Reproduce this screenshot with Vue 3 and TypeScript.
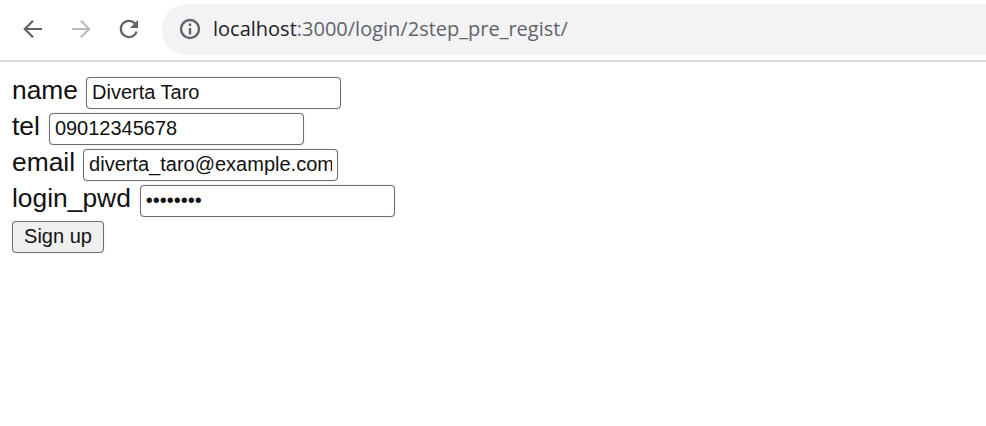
<script setup lang="ts">
import { ref } from 'vue'
const name = ref('Diverta Taro')
const tel = ref('09012345678')
const email = ref('diverta_taro@example.com')
const pwd = ref('password')
</script>

<template>
  <div class="page">
    <header class="toolbar">
      <svg class="nav back" viewBox="0 0 24 24" width="24" height="24"><path d="M21 12H4M12 3.8 3.8 12l8.2 8.2" fill="none" stroke="#5f6368" stroke-width="2.2"/></svg>
      <svg class="nav forward" viewBox="0 0 24 24" width="24" height="24"><path d="M3 12h17M12 3.8l8.2 8.2-8.2 8.2" fill="none" stroke="#b9bbbe" stroke-width="2.2"/></svg>
      <svg class="nav reload" viewBox="0 0 24 24" width="24" height="24"><path d="M19.6 14.5A8.1 8.1 0 1 1 18 6.6" fill="none" stroke="#5f6368" stroke-width="2.2"/><path d="M21 3v8h-8z" fill="#5f6368"/></svg>
      <div class="omnibox">
        <svg class="info" viewBox="0 0 24 24" width="24" height="24"><circle cx="12" cy="12" r="9" fill="none" stroke="#5f6368" stroke-width="2.4"/><path d="M12 11v6.4M12 6.6v2.4" fill="none" stroke="#5f6368" stroke-width="2.4"/></svg>
        <span class="url"><span class="host">localhost</span>:3000/login/2step_pre_regist/</span>
      </div>
    </header>
    <form class="form" @submit.prevent>
      <div class="row"><label for="f-name">name</label><input id="f-name" v-model="name" type="text" /></div>
      <div class="row wide"><label for="f-tel">tel</label><input id="f-tel" v-model="tel" type="text" /></div>
      <div class="row"><label for="f-email">email</label><input id="f-email" v-model="email" type="text" /></div>
      <div class="row wide"><label for="f-pwd">login_pwd</label><input id="f-pwd" v-model="pwd" type="password" /></div>
      <div class="row"><button type="submit">Sign up</button></div>
    </form>
  </div>
</template>

<style scoped>
.page {
  width: 986px;
  height: 426px;
  overflow: hidden;
  background: #fff;
  font-family: "Liberation Sans", Arial, sans-serif;
  color: #111;
}
.toolbar {
  box-sizing: border-box;
  height: 62px;
  display: flex;
  align-items: center;
  padding: 0 0 2px 21px;
  background: #fff;
  border-bottom: 2px solid #dadada;
}
.nav { flex: none; }
.forward { margin-left: 24px; }
.reload { margin-left: 24px; }
.omnibox {
  flex: 1;
  height: 51px;
  margin-left: 21px;
  display: flex;
  align-items: center;
  padding-left: 16px;
  background: #f3f3f5;
  border-radius: 25px 0 0 25px;
}
.info { flex: none; }
.url {
  margin-left: 11px;
  padding-bottom: 1px;
  font-family: "Open Sans", "Noto Sans", sans-serif;
  font-size: 20px;
  color: #5f6368;
}
.host { color: #202124; }
.form {
  display: flex;
  flex-direction: column;
  gap: 4px;
  padding: 15px 12px 0;
}
.row {
  display: flex;
  align-items: center;
  gap: 8px;
  height: 32px;
}
.row.wide { gap: 9px; }
label {
  font-size: 26.4px;
  line-height: 32px;
  position: relative;
  top: -3px;
}
input {
  box-sizing: border-box;
  width: 255px;
  height: 32px;
  padding: 0 5px 2px;
  border: 1px solid #6f6f6f;
  box-shadow: 0 0 1px rgba(118, 118, 118, 0.6);
  border-radius: 4px;
  background: #fff;
  font-family: "Liberation Sans", Arial, sans-serif;
  font-size: 20px;
  color: #111;
  outline: none;
}
button {
  box-sizing: border-box;
  width: 92px;
  height: 32px;
  padding: 0 0 2px;
  border: 1px solid #6f6f6f;
  box-shadow: 0 0 1px rgba(118, 118, 118, 0.6);
  border-radius: 4px;
  background: #efefef;
  font-family: "Liberation Sans", Arial, sans-serif;
  font-size: 20px;
  color: #111;
}
</style>
